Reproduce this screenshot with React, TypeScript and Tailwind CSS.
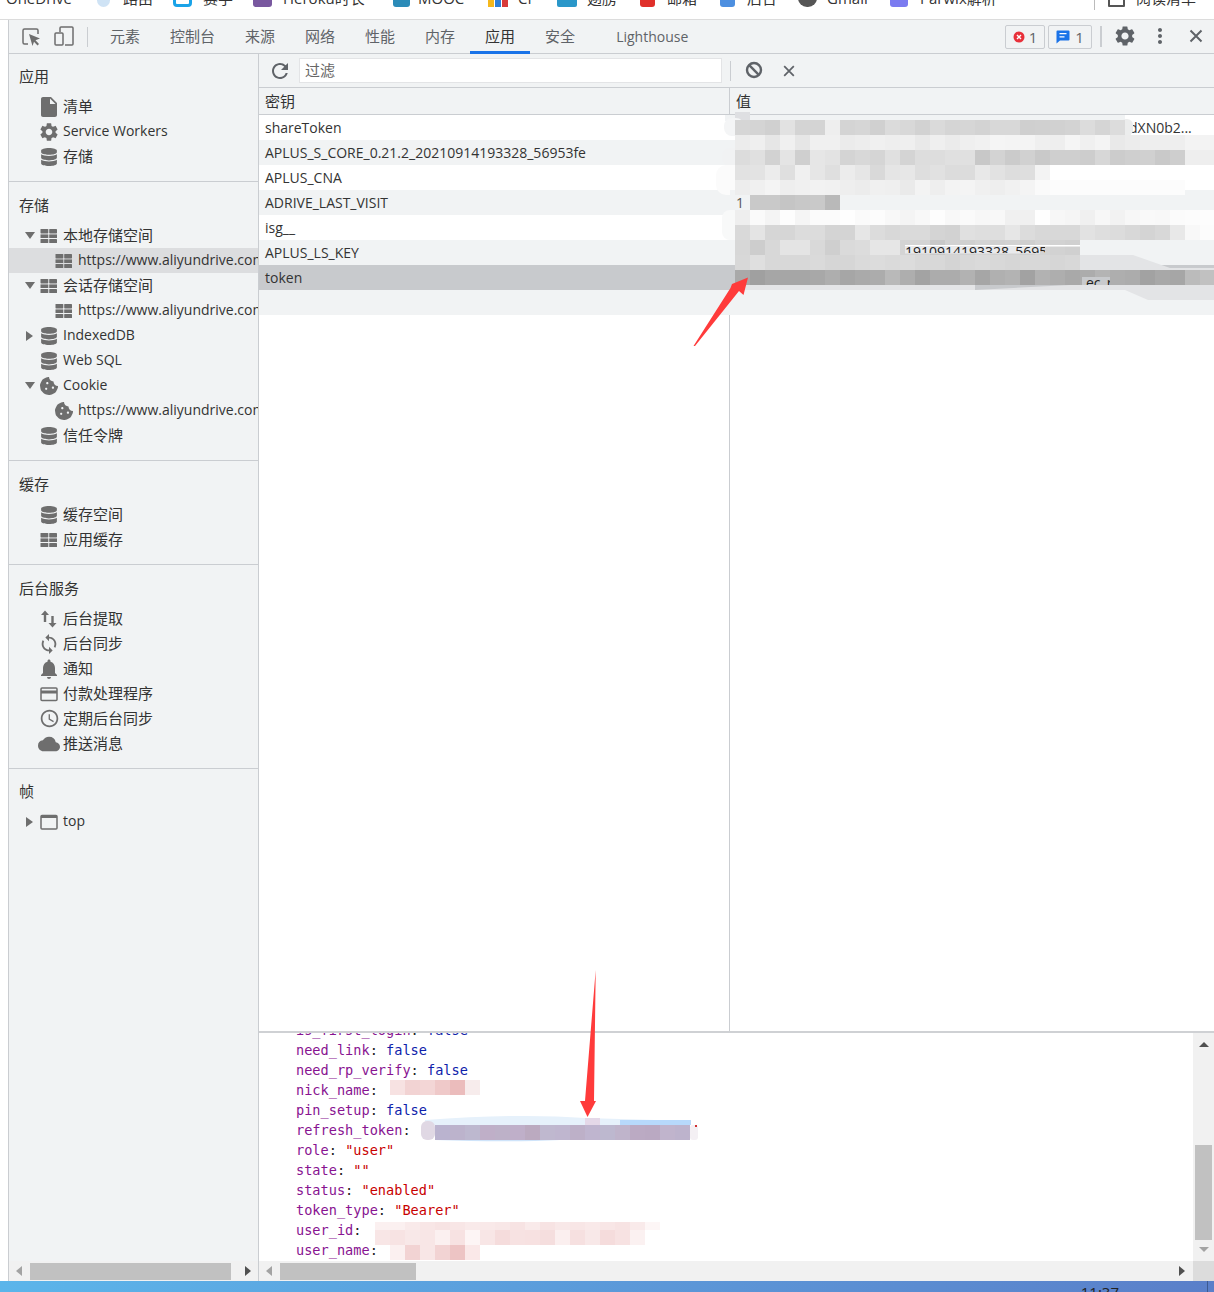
import React from "react";
import { FaDatabase, FaCookieBite } from "react-icons/fa";
import {
  MdSettings, MdInsertDriveFile, MdSync, MdNotifications, MdAccessTime, MdCloud,
  MdRefresh, MdMoreVert,
} from "react-icons/md";

const SANS = "font-['Open_Sans','Noto_Sans_CJK_SC',sans-serif]";

const Grid = () => (
  <svg width="18" height="18" viewBox="0 0 18 18" fill="#6e6e6e">
    <rect x="0.5" y="2" width="7.8" height="4.4" rx="0.6" />
    <rect x="9.2" y="2" width="7.8" height="4.4" rx="0.6" />
    <rect x="0.5" y="7.4" width="7.8" height="3.6" />
    <rect x="9.2" y="7.4" width="7.8" height="3.6" />
    <rect x="0.5" y="12" width="7.8" height="4" rx="0.6" />
    <rect x="9.2" y="12" width="7.8" height="4" rx="0.6" />
  </svg>
);
const Db = () => <FaDatabase size={18} color="#6e6e6e" />;
const Cookie = () => <FaCookieBite size={18} color="#6e6e6e" />;
const Updown = () => (
  <svg width="18" height="18" viewBox="0 0 18 18" fill="#6e6e6e">
    <path d="M5 0.5 L9 5 H6.2 V12 H3.8 V5 H1 Z" />
    <path d="M12.5 17.5 L8.5 13 H11.3 V6 H13.7 V13 H16.5 Z" />
  </svg>
);
const Card = () => (
  <svg width="18" height="18" viewBox="0 0 18 18">
    <rect x="1" y="3" width="16" height="12.5" rx="1" fill="none" stroke="#6e6e6e" strokeWidth="1.5" />
    <rect x="1" y="5.5" width="16" height="3" fill="#6e6e6e" />
  </svg>
);
const Frame = () => (
  <svg width="18" height="18" viewBox="0 0 18 18">
    <rect x="1" y="2.5" width="16" height="13.5" rx="1" fill="none" stroke="#6e6e6e" strokeWidth="1.5" />
    <rect x="1" y="2.5" width="16" height="2.5" fill="#6e6e6e" />
  </svg>
);
const CloseIcon = ({ size }: { size: number }) => (
  <svg width={size} height={size} viewBox="0 0 16 16" fill="none" stroke="#5f6368" strokeWidth="2">
    <path d="M2.5 2.5 L13.5 13.5 M13.5 2.5 L2.5 13.5" />
  </svg>
);

function Row({ icon, text, depth = 1, arrow, selected, latin }: {
  icon: React.ReactNode; text: string; depth?: 1 | 2; arrow?: "down" | "right"; selected?: boolean; latin?: boolean;
}) {
  return (
    <div className={`flex h-[25px] items-center overflow-hidden whitespace-nowrap ${depth === 2 ? "pl-[31px]" : "pl-[16px]"} ${selected ? "bg-[#dcdddf]" : ""}`}>
      <div className="flex w-[15px] shrink-0 items-center">
        {arrow === "down" && <div className="h-0 w-0 border-x-[5px] border-t-[7px] border-x-transparent border-t-[#6e6e6e]" />}
        {arrow === "right" && <div className="ml-[1px] h-0 w-0 border-y-[5px] border-l-[7px] border-y-transparent border-l-[#6e6e6e]" />}
      </div>
      <div className="flex h-[18px] w-[18px] shrink-0 items-center justify-center [&>svg]:shrink-0">{icon}</div>
      <span className={`ml-[5px] text-[#333] ${latin ? "pb-[2px] text-[14px]" : "text-[15px]"}`}>{text}</span>
    </div>
  );
}

function Title({ children, first }: { children: React.ReactNode; first?: boolean }) {
  return (
    <div className={`pl-[10px] text-[15px] leading-[22px] text-[#333] ${first ? "h-[40px] pt-[11px]" : "h-[41px] pt-[12px]"}`}>{children}</div>
  );
}
const Divider = () => <div className="mt-[12px] h-px bg-[#cacdd1]" />;

const tabs = ["元素", "控制台", "来源", "网络", "性能", "内存", "应用", "安全"];

function Toolbar() {
  return (
    <div className="flex h-[34px] shrink-0 items-start border-b border-[#cacdd1] bg-[#f1f3f4]">
      <div className="ml-[13px] mt-[8px] h-[18px] w-[18px]">
        <svg width="18" height="18" viewBox="0 0 18 18" fill="none">
          <path d="M6 16 H2.5 Q1 16 1 14.5 V2.5 Q1 1 2.5 1 H14.5 Q16 1 16 2.5 V6" stroke="#6e6e6e" strokeWidth="1.5" />
          <path d="M7 6 L18 10.5 L13.5 12.2 L17 16 L15.5 17.5 L12 13.7 L10.5 18 Z" fill="#6e6e6e" />
        </svg>
      </div>
      <div className="ml-[14px] mt-[6px] h-[20px] w-[20px]">
        <svg width="20" height="20" viewBox="0 0 20 20" fill="none" stroke="#6e6e6e" strokeWidth="1.5">
          <path d="M6 6 V2 Q6 1 7 1 H18 Q19 1 19 2 V18 Q19 19 18 19 H11" />
          <rect x="1" y="7" width="8" height="12" rx="1" />
        </svg>
      </div>
      <div className="ml-[13px] mt-[7px] h-[20px] w-px bg-[#cacdd1]" />
      <div className="ml-[7px] flex">
        {tabs.map((t) => (
          <div
            key={t}
            className={`h-[34px] border-b-[3px] px-[15px] pt-[3px] text-[15px] leading-[26px] ${t === "应用" ? "border-[#1a73e8] text-[#333]" : "border-transparent text-[#5f6368]"}`}
          >
            {t}
          </div>
        ))}
      </div>
      <div className="ml-[26px] pt-[4px] text-[14px] leading-[26px] text-[#5f6368]">Lighthouse</div>
      <div className="ml-auto flex items-start pr-[10px]">
        <div className="mt-[5px] flex h-[24px] w-[40px] items-center justify-center gap-[4px] rounded-[2px] border border-[#cacdd1] text-[15px] text-[#5f6368]">
          <svg width="12" height="12" viewBox="0 0 12 12">
            <circle cx="6" cy="6" r="5.5" fill="#e8303a" />
            <path d="M4 4 L8 8 M8 4 L4 8" stroke="#fff" strokeWidth="1.4" />
          </svg>
          1
        </div>
        <div className="ml-[3px] mt-[5px] flex h-[24px] w-[44px] items-center justify-center gap-[5px] rounded-[2px] border border-[#cacdd1] text-[15px] text-[#5f6368]">
          <svg width="14" height="14" viewBox="0 0 14 14">
            <path d="M1.5 0.5 H12.5 Q13.5 0.5 13.5 1.5 V9.5 Q13.5 10.5 12.5 10.5 H4 L0.5 13.5 V1.5 Q0.5 0.5 1.5 0.5 Z" fill="#1a73e8" />
            <path d="M3.5 3.7 H10.5 M3.5 6.8 H8.5" stroke="#fff" strokeWidth="1.3" />
          </svg>
          1
        </div>
        <div className="ml-[8px] mt-[6px] h-[21px] w-[2px] bg-[#cacdd1]" />
        <div className="ml-[11px] mt-[4px]"><MdSettings size={24} color="#5f6368" /></div>
        <div className="ml-[11px] mt-[4px]"><MdMoreVert size={24} color="#5f6368" /></div>
        <div className="ml-[16px] mt-[8px]"><CloseIcon size={16} /></div>
      </div>
    </div>
  );
}

function HBar({ thumb }: { thumb: "side" | "main" }) {
  return (
    <div className="flex h-[20px] shrink-0 items-start bg-[#f1f1f1]">
      <div className="ml-[7px] mt-[5px] h-0 w-0 border-y-[5px] border-r-[6px] border-y-transparent border-r-[#a3a3a3]" />
      {thumb === "side" ? (
        <>
          <div className="ml-[8px] mt-[2px] h-[17px] w-[201px] bg-[#c1c1c1]" />
          <div className="ml-[14px] mt-[5px] h-0 w-0 border-y-[5px] border-l-[6px] border-y-transparent border-l-[#505050]" />
        </>
      ) : (
        <>
          <div className="ml-[8px] mt-[2px] h-[17px] w-[136px] bg-[#c1c1c1]" />
          <div className="ml-auto mr-[8px] mt-[5px] h-0 w-0 border-y-[5px] border-l-[6px] border-y-transparent border-l-[#505050]" />
          <div className="h-[20px] w-[21px] bg-[#dcdcdc]" />
        </>
      )}
    </div>
  );
}

function Sidebar() {
  return (
    <div className="flex w-[250px] shrink-0 flex-col border-r border-[#cacdd1] bg-[#f1f3f4]">
      <div className="flex-1 overflow-hidden">
        <Title first>应用</Title>
        <Row icon={<MdInsertDriveFile size={24} color="#6e6e6e" />} text="清单" />
        <Row icon={<MdSettings size={22} color="#6e6e6e" />} text="Service Workers" latin />
        <Row icon={<Db />} text="存储" />
        <Divider />
        <Title>存储</Title>
        <Row icon={<Grid />} text="本地存储空间" arrow="down" />
        <Row icon={<Grid />} text="https://www.aliyundrive.com" depth={2} selected latin />
        <Row icon={<Grid />} text="会话存储空间" arrow="down" />
        <Row icon={<Grid />} text="https://www.aliyundrive.com" depth={2} latin />
        <Row icon={<Db />} text="IndexedDB" arrow="right" latin />
        <Row icon={<Db />} text="Web SQL" latin />
        <Row icon={<Cookie />} text="Cookie" arrow="down" latin />
        <Row icon={<Cookie />} text="https://www.aliyundrive.com" depth={2} latin />
        <Row icon={<Db />} text="信任令牌" />
        <Divider />
        <Title>缓存</Title>
        <Row icon={<Db />} text="缓存空间" />
        <Row icon={<Grid />} text="应用缓存" />
        <Divider />
        <Title>后台服务</Title>
        <Row icon={<Updown />} text="后台提取" />
        <Row icon={<MdSync size={22} color="#6e6e6e" />} text="后台同步" />
        <Row icon={<MdNotifications size={24} color="#6e6e6e" />} text="通知" />
        <Row icon={<Card />} text="付款处理程序" />
        <Row icon={<MdAccessTime size={21} color="#6e6e6e" />} text="定期后台同步" />
        <Row icon={<MdCloud size={22} color="#6e6e6e" />} text="推送消息" />
        <Divider />
        <Title first>帧</Title>
        <Row icon={<Frame />} text="top" arrow="right" latin />
      </div>
      <HBar thumb="side" />
    </div>
  );
}

const keys = [
  "shareToken",
  "APLUS_S_CORE_0.21.2_20210914193328_56953fe",
  "APLUS_CNA",
  "ADRIVE_LAST_VISIT",
  "isg__",
  "APLUS_LS_KEY",
  "token",
  "",
];

function StorageTable() {
  return (
    <>
      <div className="flex h-[27px] shrink-0 border-b border-[#cacdd1] bg-[#f1f3f4] text-[15px] leading-[26px] text-[#333]">
        <div className="w-[471px] border-r border-[#cacdd1] pl-[6px]">密钥</div>
        <div className="pl-[6px]">值</div>
      </div>
      {keys.map((k, i) => (
        <div
          key={i}
          className={`flex h-[25px] shrink-0 items-center pl-[6px] text-[14px] text-[#333] ${k === "token" ? "bg-[#c8cacd]" : i % 2 === 1 || k === "" ? "bg-[#f1f3f4]" : "bg-white"}`}
        >
          <span className="w-[465px]">{k}</span>
          {k === "shareToken" && <span className="ml-[399px]">dXN0b2...</span>}
        </div>
      ))}
      <div className="flex flex-1">
        <div className="w-[471px] border-r border-[#cacdd1]" />
      </div>
    </>
  );
}

type Kind = "false" | "str" | "none";
const lines: [string, string, Kind][] = [
  ["is_first_login", "false", "false"],
  ["need_link", "false", "false"],
  ["need_rp_verify", "false", "false"],
  ["nick_name", "", "none"],
  ["pin_setup", "false", "false"],
  ["refresh_token", "", "none"],
  ["role", "\"user\"", "str"],
  ["state", "\"\"", "str"],
  ["status", "\"enabled\"", "str"],
  ["token_type", "\"Bearer\"", "str"],
  ["user_id", "", "none"],
  ["user_name", "", "none"],
];

function Preview() {
  return (
    <div className="flex h-[228px] shrink-0 overflow-hidden bg-white">
      <div className="flex-1 overflow-hidden pl-[37px]">
        <div className="-mt-[13px] whitespace-pre font-['DejaVu_Sans_Mono',monospace] text-[13.6px] leading-[20px]">
          {lines.map(([k, v, kind]) => (
            <div key={k} className="h-[20px]">
              <span className="text-[#881391]">{k}</span>
              <span className="text-[#222]">: </span>
              <span className={kind === "false" ? "text-[#0d22aa]" : "text-[#c80000]"}>{v}</span>
            </div>
          ))}
        </div>
      </div>
      <div className="flex w-[21px] shrink-0 flex-col items-center bg-[#f1f1f1] px-[2px]">
        <div className="mt-[9px] h-0 w-0 border-x-[5px] border-b-[5px] border-x-transparent border-b-[#505050]" />
        <div className="mt-[98px] h-[95px] w-[17px] bg-[#c1c1c1]" />
        <div className="mt-[7px] h-0 w-0 border-x-[5px] border-t-[5px] border-x-transparent border-t-[#a3a3a3]" />
      </div>
    </div>
  );
}

type M = { y: number; x?: number; h?: number; c: string[] };
const s = (t: string) => t.split(" ").map((v) => (v.length === 2 ? `#${v}${v}${v}` : `#${v}`));
const grayRows: M[] = [
  { y: 120, c: s("d6 d4 d0 e2 d4 d4 ee d4 d6 d0 db d8 d2 da d5 d6 d3 d8 d8 cf d0 d1 d3 dc d5 dc") },
  { y: 135, c: s("ec ef e6 f0 e6 f0 f0 eb ed f0 ee ef e9 ef eb ef f1 f5 f4 f4 ef ee f5 f0 f4 e9 ec ee ee ee f3 f3") },
  { y: 150, c: s("dc e0 d2 e4 cf e6 e3 d4 d8 d5 e0 d4 dd dd e0 e0 c8 d3 cb d1 c9 cf cf cd d7 cc cf d0 c9 ce ee ee") },
  { y: 165, c: s("e2 e3 ec df f0 e6 df ec e6 d9 e5 e7 de e1 dc dc e8 e2 dd de f3") },
  { y: 180, c: s("ed f0 f4 ee f0 f2 f1 ee ec f0 ef ea f3 ee f3 f4 f0 ee f1 f4 fa fc fc fc fc fc fc fc fc fc") },
  { y: 195, x: 750, c: s("c9 c9 c5 c8 c9 b9") },
  { y: 210, c: s("ee fa f4 fd f5 fb fb fe fa fc f8 f4 f8 fd f8 fa f7 f8 f0 f0 fe f7 f5 f0 f7 f2 f7 f9 f8 fb fc fd") },
  { y: 225, c: s("d9 e4 d6 d6 dc dc d4 d4 e6 dc d8 da da d4 d2 e0 de de e6 dc d8 d8 d8 e2 de dc d8 d4 d8 e8 f8 fc") },
  { y: 240, c: s("d7 cd d8 e4 e4 d9 cf da dc e6 e6 d4 d4 c8 d2 d0 d4 d0 d2 cf d4 d2 d0") },
  { y: 255, c: s("d8 df d8 d8 d8 da d6 d6 da dc da dc d8 d8 d4 d8 da d8 d6 d8 d8 d6 d8") },
  { y: 270, c: s("a9 a0 a6 a6 a6 a8 ae a6 aa ac b9 ae a3 ac ac b2 a6 b0 b3 a2 b2 ae a9 ac b4 ae ac a2 a8 a6 bb c1") },
  { y: 1080, x: 390, c: ["#f7e2e2", "#f2d3d3", "#f3d6d6", "#efc9c9", "#ebbcbc", "#f7ecec"] },
  { y: 1125, x: 435, c: ["#bab3cf", "#bcb3cc", "#bdb8cf", "#bfafc8", "#bdb1c8", "#bfafc9", "#bbaac0", "#bfb8cf", "#bfb6cf", "#bdb0c8", "#bfb5cf", "#bdb8cf", "#bfb4cb", "#bbaac3", "#baa9c2", "#c0b4cc", "#bdb3cc"] },
  { y: 1222, x: 375, h: 8, c: ["#fbf0f0", "#fbf0f0", "#f9eaea", "#f8e6e6", "#f7e3e3", "#f8e6e6", "#f9eaea", "#f9e9e9", "#f8e7e7", "#f7e3e3", "#f9eaea", "#f7e3e3", "#f8e8e8", "#f8e6e6", "#f9e9e9", "#f8e6e6", "#f7e3e3", "#f9eaea", "#fdf6f6"] },
  { y: 1230, x: 375, c: ["#f8e6e6", "#f7e3e3", "#f8e8e8", "#f8e6e6", "#fbf0f0", "#f7e2e2", "#fdf5f5", "#f8e6e6", "#f5dcdc", "#f7e2e2", "#f7e1e1", "#f5dede", "#fbefef", "#f6e0e0", "#f8e8e8", "#f5dcdc", "#f7e2e2", "#fbf1f1"] },
  { y: 1245, x: 390, c: ["#fbf0f0", "#f2d3d3", "#f8e6e6", "#f2d3d3", "#edc4c4", "#fae8e8"] },
];

function Overlay() {
  return (
    <svg className="pointer-events-none absolute left-0 top-0" width="1214" height="1292" viewBox="0 0 1214 1292">
      <defs>
        <clipPath id="frag1"><rect x="905" y="246" width="140" height="7" /></clipPath>
        <clipPath id="frag2"><rect x="1085" y="278" width="25" height="7" /></clipPath>
      </defs>
      <rect x="725" y="115" width="400" height="6" fill="#f1f3f4" />
      <rect x="735" y="112" width="15" height="8" fill="#dedfe2" />
      <rect x="724" y="118" width="20" height="18" rx="8" fill="#f4f5f6" />
      <rect x="722" y="148" width="20" height="18" rx="8" fill="#f1f2f3" />
      <rect x="716" y="165" width="30" height="30" rx="10" fill="#fbfbfb" />
      <rect x="730" y="190" width="484" height="25" fill="#f1f3f4" />
      <rect x="722" y="210" width="20" height="30" rx="8" fill="#f8f9f9" />
      <rect x="722" y="240" width="20" height="25" rx="6" fill="#f1f3f4" />
      <rect x="735" y="285" width="240" height="5" fill="#e4e5e7" />
      <polygon points="1080,255 1133,255 1170,268 1214,268 1214,270 1080,270" fill="#e3e4e6" />
      <polygon points="975,290 1070,285 1214,285 1214,300 1148,300 1125,290" fill="#e3e4e6" />
      <rect x="1120" y="119" width="13" height="17" rx="6" fill="#eceded" />
      {grayRows.map((r) =>
        r.c.map((c, i) => (
          <rect key={`${r.y}-${i}`} x={(r.x ?? 735) + i * 15} y={r.y} width="15" height={r.h ?? 15} fill={c} />
        )),
      )}
      <rect x="1080" y="240" width="134" height="15" fill="#f1f3f4" />
      <rect x="905" y="245" width="175" height="1.5" fill="#ffffff" />
      <rect x="905" y="246.5" width="135" height="7" fill="#e9eaec" />
      <rect x="1082" y="277" width="28" height="8" fill="#c8cacd" />
      <text x="905" y="257" clipPath="url(#frag1)" fontFamily="'Open Sans',sans-serif" fontSize="14" fill="#222">1910914193328_56953</text>
      <text x="1086" y="288" clipPath="url(#frag2)" fontFamily="'Open Sans',sans-serif" fontSize="14" fill="#222">ec_r</text>
      <text x="736" y="208" fontFamily="'Open Sans',sans-serif" fontSize="14" fill="#555">1</text>
      <path d="M425 1120 Q520 1113 585 1118 L691 1121 V1125 H425 Z" fill="#e6f1fb" />
      <rect x="620" y="1120" width="71" height="5" fill="#b7d9fb" />
      <rect x="585" y="1118" width="15" height="7" fill="#e4d8e8" />
      <path d="M435 1140 H560 Q520 1142 470 1141 Z" fill="#cfe4fa" />
      <rect x="421" y="1121" width="14" height="19" rx="6" fill="#e0d8e4" />
      <rect x="690" y="1125" width="8" height="15" rx="3" fill="#f4f0f4" />
      <rect x="695" y="1125" width="2" height="2" fill="#d03030" />
      <polygon points="693.5,346 730.5,288 732,284 748,277.5 743.5,295 739,291 695,346" fill="#ff3b3b" />
      <polygon points="595.7,970 594,1101 596,1101 587.5,1117 580,1101 585,1101" fill="#ff3b3b" />
      <circle cx="754" cy="70" r="7" fill="none" stroke="#5f6368" strokeWidth="2.4" />
      <path d="M749.2 65.2 L758.8 74.8" stroke="#5f6368" strokeWidth="2.4" />
    </svg>
  );
}

function Bookmarks() {
  return (
    <div className="h-[19px] shrink-0 overflow-hidden bg-white">
      <div className="-mt-[14px] flex h-[24px] items-center whitespace-nowrap text-[15px] text-[#333]">
        <span className="ml-[6px] w-[67px]">OneDrive</span>
        <div className="ml-[24px] h-[18px] w-[13px] rounded-full bg-[#cfe3f5]" />
        <span className="ml-[13px] w-[30px]">路由</span>
        <div className="ml-[20px] h-[18px] w-[19px] rounded-[4px] border-[3px] border-[#1aa3e8]" />
        <span className="ml-[11px] w-[30px]">赛学</span>
        <div className="ml-[20px] h-[18px] w-[19px] rounded-[3px] bg-[#79589f]" />
        <span className="ml-[11px] w-[84px]">Heroku时长</span>
        <div className="ml-[26px] h-[18px] w-[17px] rounded-[3px] bg-[#2b8bb8]" />
        <span className="ml-[8px] w-[49px]">MOOC</span>
        <div className="ml-[21px] flex h-[18px] w-[20px] gap-[1px]">
          <div className="w-[6px] bg-[#f5b81d]" /><div className="w-[6px] bg-[#2f80d8]" /><div className="w-[6px] bg-[#d83a3a]" />
        </div>
        <span className="ml-[10px] w-[17px]">CI</span>
        <div className="ml-[22px] h-[18px] w-[20px] rounded-[2px] bg-[#2a97c9]" />
        <span className="ml-[10px] w-[30px]">翅膀</span>
        <div className="ml-[23px] h-[18px] w-[15px] rounded-[3px] bg-[#e0302a]" />
        <span className="ml-[12px] w-[30px]">邮箱</span>
        <div className="ml-[23px] h-[18px] w-[15px] rounded-[3px] bg-[#4d8fe0]" />
        <span className="ml-[12px] w-[30px]">后台</span>
        <div className="ml-[21px] h-[18px] w-[19px] rounded-full bg-[#555]" />
        <span className="ml-[10px] w-[40px]">Gmail</span>
        <div className="ml-[23px] h-[18px] w-[18px] rounded-[3px] bg-[#7b7bf0]" />
        <span className="ml-[12px] w-[75px]">Parwix解析</span>
        <div className="ml-[99px] h-[24px] w-px bg-[#bbb]" />
        <div className="ml-[13px] h-[18px] w-[17px] rounded-[1px] border-2 border-[#555]" />
        <span className="ml-[11px] w-[60px]">阅读清单</span>
      </div>
    </div>
  );
}

export default function App() {
  return (
    <div className={`relative flex h-[1292px] w-[1214px] flex-col overflow-hidden bg-white ${SANS}`}>
      <Bookmarks />
      <div className="h-px shrink-0 bg-[#dcdcdc]" />
      <div className="flex min-h-0 flex-1 pl-[8px]">
        <div className="flex min-w-0 flex-1 flex-col border-l border-[#cacdd1]">
          <Toolbar />
          <div className="flex min-h-0 flex-1">
            <Sidebar />
            <div className="flex min-w-0 flex-1 flex-col">
              <div className="flex h-[34px] shrink-0 items-center border-b border-[#cacdd1] bg-[#f1f3f4]">
                <div className="ml-[9px]"><MdRefresh size={24} color="#5f6368" /></div>
                <div className="ml-[7px] flex h-[25px] w-[423px] items-center border border-[#e3e4e6] bg-white pl-[5px] text-[15px] text-[#666]">过滤</div>
                <div className="ml-[8px] h-[20px] w-px bg-[#cacdd1]" />
                <div className="ml-[51px]"><CloseIcon size={14} /></div>
              </div>
              <StorageTable />
              <div className="h-[2px] shrink-0 bg-[#cfd1d4]" />
              <Preview />
              <HBar thumb="main" />
            </div>
          </div>
        </div>
      </div>
      <div className="flex h-[11px] shrink-0 justify-end overflow-hidden bg-linear-to-r from-[#5bb5ea] to-[#5a7fc9]">
        <span className="mr-[88px] mt-[1px] text-[15px] leading-[20px] text-[#222]">11:37</span>
        <div className="mr-[6px] w-px bg-[#3d5a90]" />
      </div>
      <Overlay />
    </div>
  );
}
